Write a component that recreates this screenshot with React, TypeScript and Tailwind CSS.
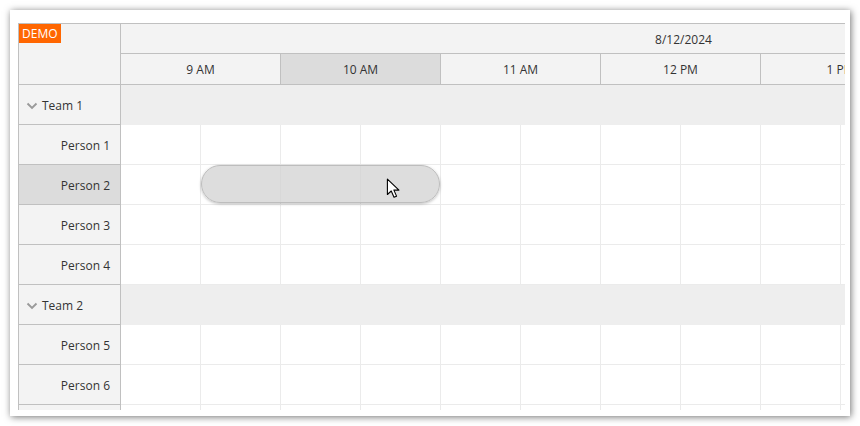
import React from "react";

const font = { fontFamily: '"Open Sans", "Noto Sans", sans-serif' };

type Row = { kind: "team" | "person"; name: string; active?: boolean };

const rows: Row[] = [
  { kind: "team", name: "Team 1" },
  { kind: "person", name: "Person 1" },
  { kind: "person", name: "Person 2", active: true },
  { kind: "person", name: "Person 3" },
  { kind: "person", name: "Person 4" },
  { kind: "team", name: "Team 2" },
  { kind: "person", name: "Person 5" },
  { kind: "person", name: "Person 6" },
  { kind: "person", name: "" },
];

const hours = ["9 AM", "10 AM", "11 AM", "12 PM", "1 PM"];
const cells = Array.from({ length: 10 });

function Chevron() {
  return (
    <svg width="12" height="12" viewBox="0 0 12 12" className="mr-[4px]">
      <path d="M1.5 3.5 L6 8 L10.5 3.5" fill="none" stroke="#9a9a9a" strokeWidth="1.9" />
    </svg>
  );
}

function Cursor() {
  return (
    <svg width="16" height="22" viewBox="0 0 14 20" className="absolute left-[376px] top-[168px]">
      <path
        d="M1 1 L1 15 L4.5 11.8 L7 17.5 L9.3 16.5 L6.9 11 L11.5 11 Z"
        fill="#fff"
        stroke="#000"
        strokeWidth="1"
        strokeLinejoin="round"
      />
    </svg>
  );
}

export default function App() {
  return (
    <div className="w-[860px] h-[426px] bg-white p-[10px]" style={font}>
      <div className="relative w-[840px] h-[406px] bg-white shadow-[1px_1px_7px_rgba(0,0,0,0.55)] pl-[8px] pt-[13px]">
        <div className="w-[827px] h-[387px] overflow-hidden border-l border-t border-[#c0c0c0] text-[12px] text-[#333]">
          <div className="flex w-max">
            <div className="w-[102px] shrink-0">
              {/* corner */}
              <div className="h-[61px] border-b border-r border-[#c0c0c0] bg-[#f3f3f3]">
                <span className="inline-block bg-[#ff6600] text-white text-[12px] leading-[19px] px-[3px]">DEMO</span>
              </div>
              {rows.map((r, idx) =>
                r.kind === "team" ? (
                  <div
                    key={idx}
                    className="h-[40px] border-b border-r border-[#c0c0c0] bg-[#f3f3f3] flex items-center pl-[7px] pt-[2px]"
                  >
                    <Chevron />
                    <span className="text-[#333]">{r.name}</span>
                  </div>
                ) : (
                  <div
                    key={idx}
                    className={`h-[40px] border-b border-r border-[#c0c0c0] flex items-center justify-end pr-[10px] pt-[2px] ${
                      r.active ? "bg-[#dcdcdc]" : "bg-[#f3f3f3]"
                    }`}
                  >
                    {r.name}
                  </div>
                )
              )}
            </div>
            <div className="shrink-0">
              <div className="h-[30px] w-[1126px] border-b border-r border-[#c0c0c0] bg-[#f3f3f3] flex items-center justify-center pt-[2px]">
                8/12/2024
              </div>
              <div className="flex h-[31px]">
                {hours.map((h) => (
                  <div
                    key={h}
                    className={`w-[160px] shrink-0 border-b border-r border-[#c0c0c0] flex items-center justify-center pt-[2px] ${
                      h === "10 AM" ? "bg-[#dcdcdc]" : "bg-[#f3f3f3]"
                    }`}
                  >
                    {h}
                  </div>
                ))}
              </div>
              {rows.map((r, idx) =>
                r.kind === "team" ? (
                  <div key={idx} className="h-[40px] w-[800px] bg-[#eeeeee]" />
                ) : (
                  <div key={idx} className="flex h-[40px]">
                    {cells.map((_, i) => (
                      <div key={i} className="w-[80px] shrink-0 border-b border-r border-[#ebebeb] bg-white" />
                    ))}
                  </div>
                )
              )}
            </div>
          </div>
        </div>
        {/* event bar */}
        <div className="absolute left-[191px] top-[155px] w-[239px] h-[38px] rounded-full bg-[rgba(210,210,210,0.75)] border border-[#bdbdbd] shadow-[0_1px_3px_rgba(0,0,0,0.25)]" />
        <Cursor />
      </div>
    </div>
  );
}
